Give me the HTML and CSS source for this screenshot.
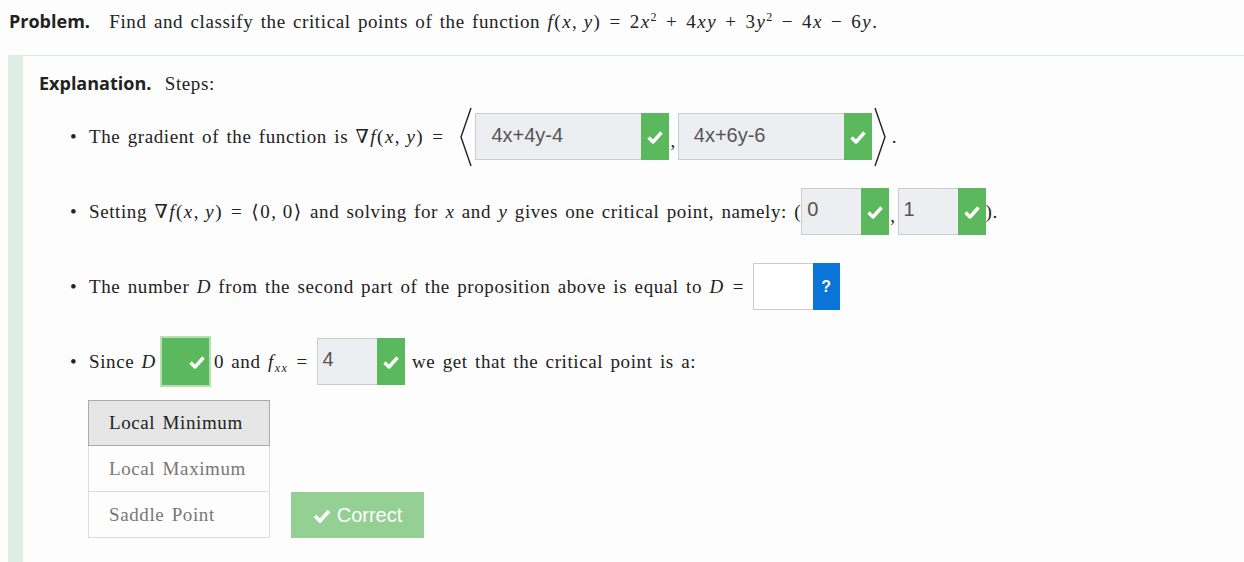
FILE: index.html
```html
<!DOCTYPE html>
<html lang="en">
<head>
    <meta charset="UTF-8">
    <title>Critical points</title>
    <link rel="stylesheet" href="styles.css">
</head>
<body>
    <div class="problem">
        <b class="label">Problem.</b>
        Find and classify the critical points of the function
        <span class="math"><i>f</i>(<i>x</i>,&thinsp;<i>y</i>)<span class="op">=</span>2<i>x</i><sup>2</sup><span class="op">+</span>4<i>xy</i><span class="op">+</span>3<i>y</i><sup>2</sup><span class="op">&minus;</span>4<i>x</i><span class="op">&minus;</span>6<i>y</i>.</span>
    </div>

    <div class="explanation">
        <p class="intro"><b class="label">Explanation.</b> Steps:</p>

        <ul class="steps">
            <li>
                The gradient of the function is&nbsp;<span class="math">&nabla;<i>f</i>(<i>x</i>,&thinsp;<i>y</i>)<span class="op">=</span></span>
                <svg class="angle open" width="14" height="60" viewBox="0 0 14 60"><polyline points="12,1 2,30 12,59" fill="none" stroke="#222" stroke-width="1.4"/></svg>
                <span class="answer wide"><span class="field">4x+4y-4</span><span class="ok"><svg width="16" height="14" viewBox="0 0 16 14"><path d="M1.5 7.5 L6 12 L14.5 2.5" fill="none" stroke="#fff" stroke-width="3.4" stroke-linejoin="round"/></svg></span></span>
                <span class="sep">,</span>
                <span class="answer wide"><span class="field">4x+6y-6</span><span class="ok"><svg width="16" height="14" viewBox="0 0 16 14"><path d="M1.5 7.5 L6 12 L14.5 2.5" fill="none" stroke="#fff" stroke-width="3.4" stroke-linejoin="round"/></svg></span></span>
                <svg class="angle" width="14" height="60" viewBox="0 0 14 60"><polyline points="2,1 12,30 2,59" fill="none" stroke="#222" stroke-width="1.4"/></svg>
                <span class="dot">.</span>
            </li>
            <li>
                Setting&nbsp;<span class="math">&nabla;<i>f</i>(<i>x</i>,&thinsp;<i>y</i>)<span class="op">=</span>&#10216;0,&thinsp;0&#10217;</span>&nbsp;and solving for&nbsp;<i>x</i>&nbsp;and&nbsp;<i>y</i>&nbsp;gives one critical point, namely: (
                <span class="answer small"><span class="field">0</span><span class="ok"><svg width="16" height="14" viewBox="0 0 16 14"><path d="M1.5 7.5 L6 12 L14.5 2.5" fill="none" stroke="#fff" stroke-width="3.4" stroke-linejoin="round"/></svg></span></span>
                <span class="sep">,</span>
                <span class="answer small"><span class="field">1</span><span class="ok"><svg width="16" height="14" viewBox="0 0 16 14"><path d="M1.5 7.5 L6 12 L14.5 2.5" fill="none" stroke="#fff" stroke-width="3.4" stroke-linejoin="round"/></svg></span></span>
                <span>).</span>
            </li>
            <li>
                The number&nbsp;<i>D</i>&nbsp;from the second part of the proposition above is equal to&nbsp;<span class="math"><i>D</i><span class="op">=</span></span>
                <span class="answer small blank"><span class="field"></span><span class="ask">?</span></span>
            </li>
            <li>
                Since&nbsp;<i>D</i>
                <span class="choice"><svg width="16" height="14" viewBox="0 0 16 14"><path d="M1.5 7.5 L6 12 L14.5 2.5" fill="none" stroke="#fff" stroke-width="3.4" stroke-linejoin="round"/></svg></span>
                0 and&nbsp;<span class="math"><i>f</i><sub><i>xx</i></sub><span class="op">=</span></span>
                <span class="answer small"><span class="field">4</span><span class="ok"><svg width="16" height="14" viewBox="0 0 16 14"><path d="M1.5 7.5 L6 12 L14.5 2.5" fill="none" stroke="#fff" stroke-width="3.4" stroke-linejoin="round"/></svg></span></span>
                &nbsp;we get that the critical point is a:
            </li>
        </ul>

        <div class="pick">
            <div class="options">
                <div class="option selected">Local Minimum</div>
                <div class="option">Local Maximum</div>
                <div class="option">Saddle Point</div>
            </div>
            <button class="correct"><svg width="18" height="15" viewBox="0 0 18 15"><path d="M2 8 L7 13 L16 3" fill="none" stroke="#fff" stroke-width="3.6" stroke-linejoin="round"/></svg> Correct</button>
        </div>
    </div>
</body>
</html>
```

FILE: styles.css
```css
body {
    margin: 0;
    background-color: #fdfdfd;
    font-family: "Liberation Serif", "DejaVu Serif", serif;
    font-size: 19px;
    letter-spacing: 0.6px;
    word-spacing: 2px;
    color: #222;
}

.label {
    font-family: "Open Sans", "Liberation Sans", sans-serif;
    font-weight: 700;
    font-size: 18px;
    letter-spacing: 0;
    word-spacing: 0;
    color: #222;
    margin-right: 12px;
}

.problem {
    padding: 9px 9px 0;
    height: 46px;
}

.math {
    letter-spacing: 1.5px;
}

.math sup {
    font-size: 12px;
    vertical-align: 7px;
    line-height: 0;
}

.math sub {
    font-size: 12px;
    vertical-align: -4px;
    line-height: 0;
}

.op {
    margin: 0 8px;
}

.explanation {
    margin-left: 8px;
    border-left: 15px solid #dfede4;
    border-top: 1px solid #dde9e6;
    padding: 16px 0 24px 16px;
}

.intro {
    margin: 0 0 18px;
    line-height: 22px;
}

.intro .label {
    margin-right: 6px;
}

.steps {
    list-style: none;
    margin: 0;
    padding: 0 0 0 31px;
}

.steps li {
    display: flex;
    align-items: center;
    height: 47px;
    margin-bottom: 28px;
    white-space: nowrap;
}

.steps li::before {
    content: "\2022";
    width: 19px;
    flex-shrink: 0;
}

.angle {
    margin: 0 1px;
}

.angle.open {
    margin: 0 2px 0 7px;
}

.sep {
    margin: 8px 2px 0 1px;
}

.dot {
    margin-left: 4px;
}

.answer {
    display: flex;
    height: 47px;
}

.field {
    background-color: #eceef1;
    border: 1px solid #ccc;
    border-right: none;
    color: #555;
    font-family: "Liberation Sans", Arial, sans-serif;
    font-size: 20px;
    letter-spacing: 0;
    display: flex;
    align-items: center;
    padding-bottom: 2px;
    box-sizing: border-box;
}

.answer.wide .field {
    width: 166px;
    padding-left: 15px;
}

.answer.small .field {
    width: 60px;
    padding-left: 5px;
    padding-bottom: 5px;
}

.answer.blank .field {
    background-color: #fff;
}

.ok, .ask {
    width: 28px;
    background-color: #5cb85c;
    display: flex;
    align-items: center;
    justify-content: center;
}

.ask {
    width: 27px;
    background-color: #0a74d8;
    color: #fff;
    font-family: "Liberation Sans", Arial, sans-serif;
    font-weight: 700;
    font-size: 16px;
}

.choice {
    width: 51px;
    height: 51px;
    box-sizing: border-box;
    background-color: #5cb85c;
    border: 2px solid #b5dfb5;
    display: flex;
    align-items: center;
    justify-content: flex-end;
    padding-right: 4px;
    margin: 0 3px 0 4px;
}

.pick {
    display: flex;
    align-items: flex-end;
    margin: -13px 0 0 49px;
}

.options {
    width: 182px;
}

.option {
    height: 46px;
    box-sizing: border-box;
    border: 1px solid #ddd;
    border-top: none;
    padding-left: 20px;
    display: flex;
    align-items: center;
    color: #777;
}

.option.selected {
    background-color: #e6e6e6;
    border: 1px solid #aaa;
    color: #222;
}

.correct {
    margin-left: 21px;
    width: 133px;
    height: 46px;
    border: none;
    background-color: #94d094;
    color: #fff;
    font-family: "Liberation Sans", Arial, sans-serif;
    font-size: 20px;
    letter-spacing: 0;
    display: flex;
    align-items: center;
    justify-content: center;
    gap: 6px;
}
```
